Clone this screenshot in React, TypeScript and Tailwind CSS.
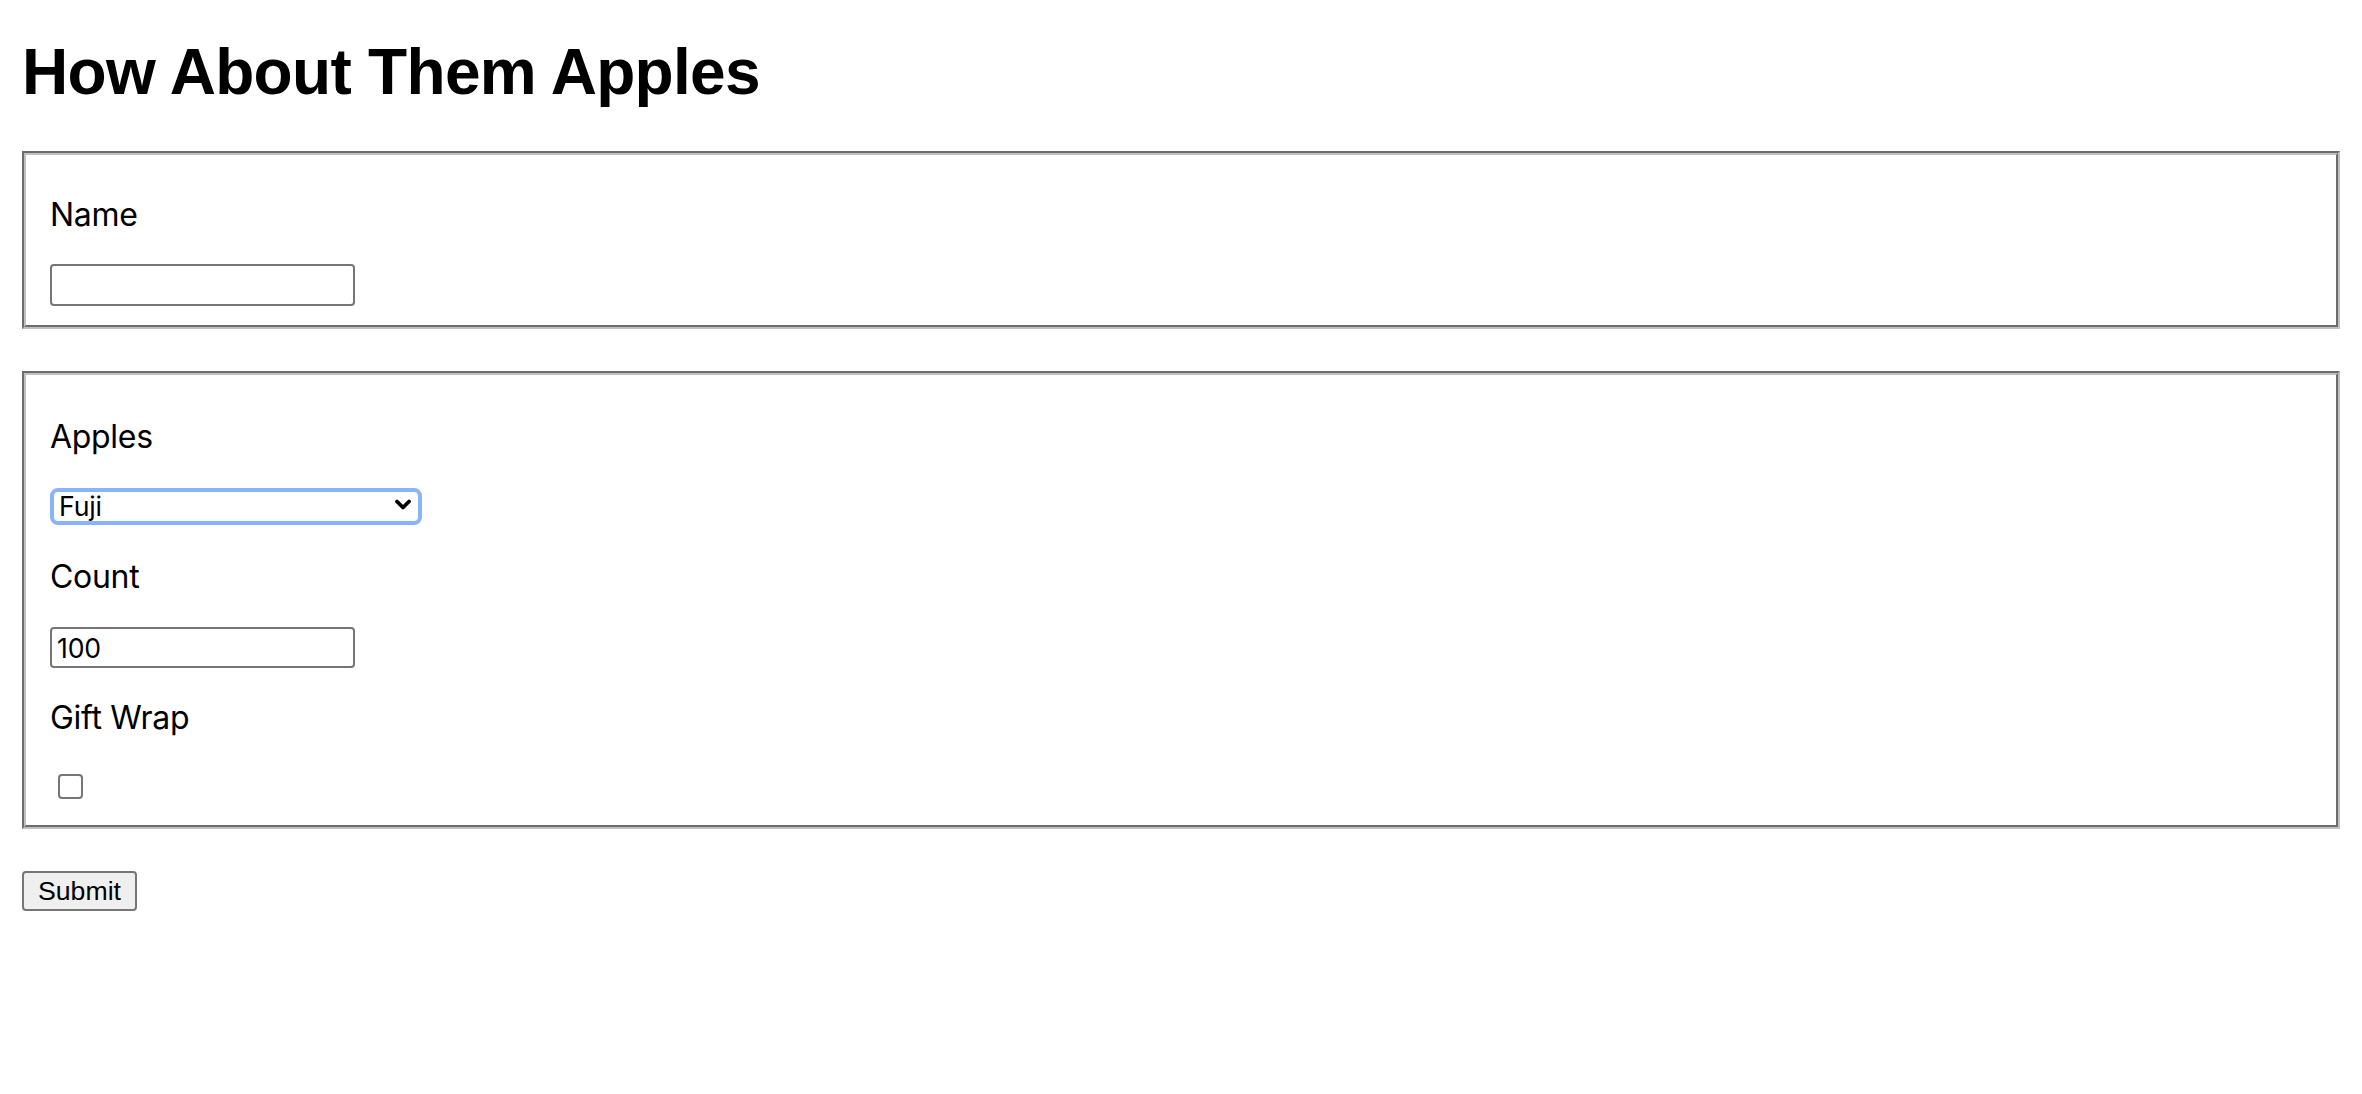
import React from "react";

const labelCls = "block font-['Inter','Noto_Sans',sans-serif] text-[32px] leading-[38px] tracking-[-0.3px] text-black";
const fieldFont = "font-['Inter','Noto_Sans',sans-serif] text-[26.67px] tracking-[-0.2px] text-black";
const btnFont = "font-['Liberation_Sans',Arial,sans-serif] text-[26.67px] text-black";

export default function App() {
  return (
    <div className="min-h-screen bg-white px-[22px] pt-[35px] text-black">
      <h1 className="font-['Liberation_Sans',Arial,sans-serif] text-[64px] leading-[74px] font-bold tracking-[-0.7px]">
        How About Them Apples
      </h1>

      <fieldset className="mt-[42px] border-4 border-[#c0c0c0] [--tw-border-style:groove] [border-style:groove] pt-[41px] pb-[19px] pl-[24px] pr-[24px]">
        <div className="flex flex-col items-start">
          <label htmlFor="name" className={labelCls}>
            Name
          </label>
          <input
            id="name"
            type="text"
            className={`mt-[30px] block w-[305px] h-[42px] border-2 border-[#767676] rounded-[4px] bg-white px-[5px] outline-none ${fieldFont}`}
          />
        </div>
      </fieldset>

      <fieldset className="mt-[42px] border-4 border-[#c0c0c0] [--tw-border-style:groove] [border-style:groove] pt-[43px] pb-[26px] pl-[24px] pr-[24px]">
        <div className="flex flex-col items-start">
          <label htmlFor="apples" className={labelCls}>
            Apples
          </label>
          <div className="relative mt-[32px] w-[372px] h-[37px]">
            <select
              id="apples"
              defaultValue="Fuji"
              className={`block w-full h-full appearance-none border-4 border-[#8ab4f8] rounded-[8px] bg-white pl-[5px] pr-[30px] outline-none leading-[29px] ${fieldFont}`}
            >
              <option>Fuji</option>
              <option>Gala</option>
              <option>Honeycrisp</option>
              <option>Granny Smith</option>
            </select>
            <svg
              className="pointer-events-none absolute right-[11px] top-[11px]"
              width="16"
              height="12"
              viewBox="0 0 16 12"
              fill="none"
            >
              <path d="M2 2.5 L8 8.5 L14 2.5" stroke="#000" strokeWidth="3.8" strokeLinecap="round" strokeLinejoin="round" />
            </svg>
          </div>

          <label htmlFor="count" className={`mt-[33px] ${labelCls}`}>
            Count
          </label>
          <input
            id="count"
            type="text"
            defaultValue="100"
            className={`mt-[31px] block w-[305px] h-[41px] border-2 border-[#767676] rounded-[4px] bg-white px-[5px] outline-none ${fieldFont}`}
          />

          <label htmlFor="gift" className={`mt-[31px] ${labelCls}`}>
            Gift Wrap
          </label>
          <input
            id="gift"
            type="checkbox"
            className="mt-[37px] ml-[8px] block appearance-none w-[25px] h-[25px] border-2 border-[#767676] rounded-[4px] bg-white"
          />
        </div>
      </fieldset>

      <button
        type="submit"
        className={`mt-[42px] block w-[115px] h-[40px] bg-[#efefef] border-2 border-[#767676] rounded-[4px] leading-[30px] ${btnFont}`}
      >
        Submit
      </button>
    </div>
  );
}
